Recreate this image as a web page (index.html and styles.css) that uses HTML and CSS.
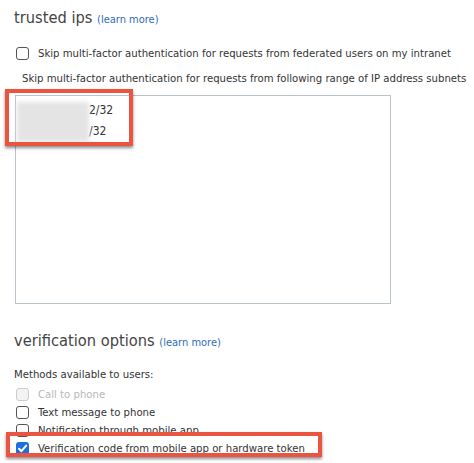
FILE: index.html
```html
<!DOCTYPE html>
<html>
<head>
<meta charset="utf-8">
<link rel="stylesheet" href="styles.css">
</head>
<body>
<div class="page">
  <h2 class="heading">trusted ips <a class="learn">(learn more)</a></h2>
  <div class="row row-first"><span class="cb"></span><span>Skip multi-factor authentication for requests from federated users on my intranet</span></div>
  <div class="subnote">Skip multi-factor authentication for requests from following range of IP address subnets</div>
  <div class="ipbox">
    <div class="ipline">2/32</div>
    <div class="ipline">/32</div>
    <div class="redact"></div>
  </div>
  <h2 class="heading heading2">verification options <a class="learn">(learn more)</a></h2>
  <div class="methods">Methods available to users:</div>
  <div class="row disabled"><span class="cb cb-disabled"></span><span>Call to phone</span></div>
  <div class="row"><span class="cb"></span><span>Text message to phone</span></div>
  <div class="row"><span class="cb"></span><span>Notification through mobile app</span></div>
  <div class="row"><span class="cb cb-checked"><svg viewBox="0 0 13 13" width="13" height="13"><path d="M3 6.8 L5.4 9.2 L10.2 3.6" fill="none" stroke="#fff" stroke-width="2" stroke-linecap="round" stroke-linejoin="round"/></svg></span><span>Verification code from mobile app or hardware token</span></div>
  <div class="hl hl-top"></div>
  <div class="hl hl-bottom"></div>
</div>
</body>
</html>
```
FILE: styles.css
```css
html, body { margin: 0; padding: 0; background: #fff; }
body {
  font-family: "DejaVu Sans Condensed", "DejaVu Sans", sans-serif;
  font-size: 11.25px;
  color: #333;
  width: 474px;
  height: 463px;
  overflow: hidden;
}
.page { position: relative; padding: 0 0 0 14px; height: 463px; }
.heading {
  margin: 0;
  padding-top: 7px;
  font-weight: normal;
  font-size: 16.3px;
  line-height: 22px;
  height: 22px;
  color: #444;
}
.learn { font-size: 11px; line-height: 12px; color: #2f6db5; text-decoration: none; }
.row {
  display: flex;
  align-items: center;
  gap: 9px;
  height: 18px;
  padding-left: 2px;
}
.row-first { margin-top: 15px; }
.subnote { margin-top: 10px; padding-left: 8px; line-height: 14px; }
.ipbox {
  position: relative;
  margin: 9px 0 0 1px;
  width: 301px;
  height: 203px;
  border: 1px solid #b9c4cc;
  box-sizing: content-box;
  padding: 4px 0 0 73px;
  font-size: 12px;
  color: #333;
}
.ipline { height: 21px; line-height: 21px; }
.redact {
  position: absolute;
  left: 1px; top: 6px;
  width: 72px; height: 40px;
  background: #e4e4e4;
  filter: blur(2px);
}
.heading2 { padding-top: 26px; }
.methods { margin-top: 15px; line-height: 16px; }
.methods + .row { margin-top: 2px; }
.cb {
  flex: none;
  width: 11px; height: 11px;
  border: 1px solid #555;
  border-radius: 3px;
  background: #fff;
  display: inline-flex;
}
.cb-disabled { border-color: #ccc; background: #f3f3f3; }
.disabled { color: #b8b8b8; }
.cb-checked { width: 13px; height: 13px; border: none; background: #1b6fe0; }
.hl {
  position: absolute;
  border: 4px solid #ea5440;
  box-shadow: 0 2px 3px rgba(0,0,0,0.45);
}
.hl-top { left: 5px; top: 89px; width: 120px; height: 49px; }
.hl-bottom { left: 6px; top: 432px; width: 308px; height: 17px; }
```
